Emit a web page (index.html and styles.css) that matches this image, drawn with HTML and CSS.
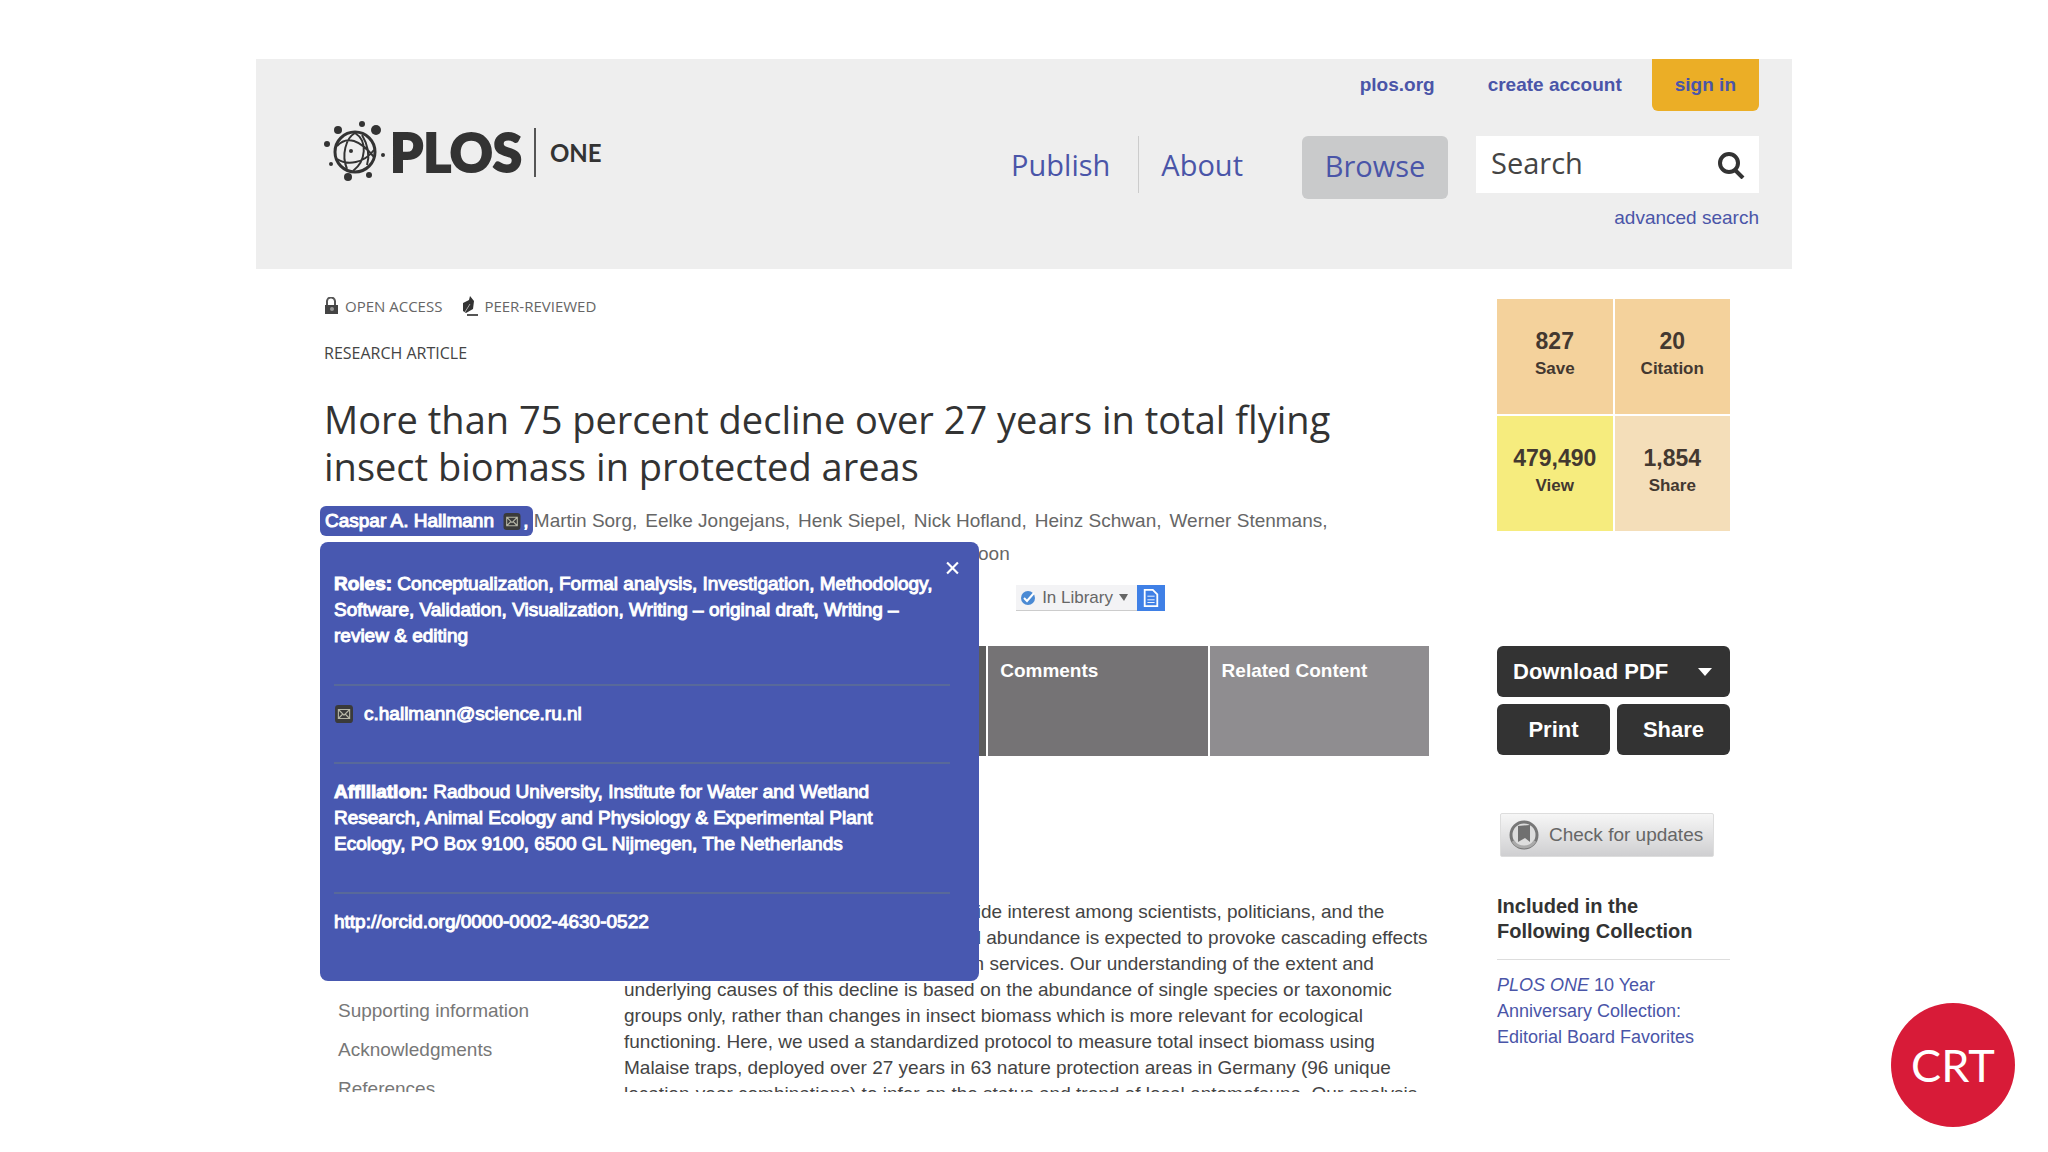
FILE: index.html
```html
<!DOCTYPE html>
<html lang="en">
<head>
  <meta charset="UTF-8">
  <title>More than 75 percent decline over 27 years in total flying insect biomass in protected areas</title>
  <link rel="stylesheet" href="styles.css">
</head>
<body>

  <div class="page">

    <!-- Header -->
    <header class="header">
      <a class="logo" href="#">
        <svg class="logo-icon" width="62" height="62" viewBox="0 0 62 62">
          <g fill="none" stroke="#333" stroke-width="2">
            <circle cx="31" cy="31" r="20" stroke-width="3"/>
            <path d="M23 48C17 34 22 17 31 12M31 12C44 20 42 40 29 50M13 25C23 14 36 19 50 36M13 38C24 45 40 42 50 29M38 14C44 24 46 34 43 44"/>
          </g>
          <g fill="#333">
            <circle cx="14" cy="9" r="4"/>
            <circle cx="38" cy="3" r="3"/>
            <circle cx="52" cy="9" r="5"/>
            <circle cx="3" cy="23" r="3"/>
            <circle cx="59" cy="34" r="2"/>
            <circle cx="7" cy="43" r="2"/>
            <circle cx="24" cy="56" r="4"/>
            <circle cx="45" cy="54" r="3"/>
            <circle cx="27" cy="30" r="2"/>
          </g>
        </svg>
        <span class="logo-plos">PLOS</span>
        <span class="logo-one">ONE</span>
      </a>

      <div class="header-right">
        <div class="user-links">
          <a href="#">plos.org</a>
          <a href="#">create account</a>
          <a class="sign-in" href="#">sign in</a>
        </div>
        <div class="main-nav">
          <a class="publish" href="#">Publish</a>
          <a class="about" href="#">About</a>
          <button class="browse" type="button">Browse</button>
          <form class="search">
            <input type="text" aria-label="Search" placeholder="Search">
            <button type="button" aria-label="Submit search">
              <svg width="28" height="28" viewBox="0 0 28 28" fill="none" stroke="#333" stroke-width="4">
                <circle cx="12" cy="12" r="9"/>
                <path d="M18 19l8 8"/>
              </svg>
            </button>
          </form>
        </div>
        <a class="advanced" href="#">advanced search</a>
      </div>
    </header>

    <div class="content">

      <!-- Article -->
      <main class="article">
        <div class="badges">
          <svg width="15" height="18" viewBox="0 0 15 18">
            <path d="M3 8V5a4 4 0 0 1 8-1v4" fill="none" stroke="#555" stroke-width="2"/>
            <path d="M1 8h13v9H1z" fill="#444"/>
            <circle cx="8" cy="12" r="2" fill="#999"/>
          </svg>
          <span>OPEN ACCESS</span>
          <svg class="pen" width="16" height="20" viewBox="0 0 16 20">
            <path d="M8 0l4 5-1 8-7 4-3-2V7l6-3z" fill="#333"/>
            <path d="M3 16l5-8" stroke="#aaa"/>
            <path d="M5 19h11" stroke="#555" stroke-width="2"/>
          </svg>
          <span>PEER-REVIEWED</span>
        </div>
        <p class="article-type">RESEARCH ARTICLE</p>
        <h1>More than 75 percent decline over 27 years in total flying insect biomass in protected areas</h1>

        <div class="authors">
          <button class="author-active" type="button">Caspar A. Hallmann
            <svg class="mail" width="18" height="17" viewBox="0 0 16 16">
              <rect width="16" height="16" rx="3" fill="#3a3a3a"/>
              <path d="M3 4h10v8H3zl5 5 5-5M3 12l4-4m6 4L9 8" fill="none" stroke="#b5b5a5"/>
            </svg>,</button>
          <span>Martin Sorg,</span><span>Eelke Jongejans,</span><span>Henk Siepel,</span><span>Nick Hofland,</span><span>Heinz Schwan,</span><span>Werner Stenmans,</span><br>
          <span>Andreas Müller,</span><span>Hubert Sumser,</span><span>Thomas Hörren,</span><span>Dave Goulson,</span><span>Hans de Kroon</span>

          <!-- Author details -->
          <div class="popup">
            <button class="close" type="button" aria-label="Close">
              <svg width="13" height="14" viewBox="0 0 12 12" stroke="#fff" stroke-width="2">
                <path d="M1 1l10 10M11 1L1 11"/>
              </svg>
            </button>
            <p><strong>Roles:</strong> Conceptualization, Formal analysis, Investigation, Methodology, Software, Validation, Visualization, Writing – original draft, Writing – review &amp; editing</p>
            <p class="line-item">
              <svg class="mail-icon" width="20" height="18" viewBox="0 0 16 16">
                <rect width="16" height="16" rx="3" fill="#3a3a3a"/>
                <path d="M3 4h10v8H3zl5 5 5-5M3 12l4-4m6 4L9 8" fill="none" stroke="#b5b5a5"/>
              </svg>
              <a href="#">c.hallmann@science.ru.nl</a>
            </p>
            <p><strong>Affiliation:</strong> Radboud University, Institute for Water and Wetland Research, Animal Ecology and Physiology &amp; Experimental Plant Ecology, PO Box 9100, 6500 GL Nijmegen, The Netherlands</p>
            <p class="line-item"><a href="#">http://orcid.org/0000-0002-4630-0522</a></p>
          </div>
        </div>

        <div class="published">
          <button class="library" type="button">
            <svg width="16" height="16" viewBox="0 0 16 16">
              <circle cx="8" cy="8" r="7" fill="#4a8ad4"/>
              <path d="M4 8l3 3 7-8" fill="none" stroke="#fff" stroke-width="2"/>
            </svg>
            In Library
            <svg width="9" height="7" viewBox="0 0 9 7"><path d="M0 0h9L5 7z" fill="#666"/></svg>
          </button>
          <button class="doc" type="button" aria-label="Open document">
            <svg width="16" height="18" viewBox="0 0 16 20" fill="none" stroke="#fff" stroke-width="2">
              <path d="M1 1h9l5 5v13H1z"/>
              <path d="M4 8h8M4 12h8M4 15h8" stroke-width="1"/>
            </svg>
          </button>
        </div>

        <nav class="tabs">
          <a class="tab-article" href="#" aria-label="Article"></a>
          <a class="tab-authors" href="#" aria-label="Authors"></a>
          <a class="tab-metrics" href="#" aria-label="Metrics"></a>
          <a class="tab-comments" href="#">Comments</a>
          <a class="tab-related" href="#">Related Content</a>
        </nav>

        <div class="article-body">
          <nav class="sections">
            <a href="#">Supporting information</a>
            <a href="#">Acknowledgments</a>
            <a href="#">References</a>
          </nav>
          <section class="abstract">
            <p>Global declines in insects have sparked wide interest among scientists, politicians, and the general public. Loss of insect diversity and abundance is expected to provoke cascading effects on food webs and to jeopardize ecosystem services. Our understanding of the extent and underlying causes of this decline is based on the abundance of single species or taxonomic groups only, rather than changes in insect biomass which is more relevant for ecological functioning. Here, we used a standardized protocol to measure total insect biomass using Malaise traps, deployed over 27 years in 63 nature protection areas in Germany (96 unique location-year combinations) to infer on the status and trend of local entomofauna. Our analysis</p>
          </section>
        </div>
      </main>

      <!-- Sidebar -->
      <aside class="sidebar">
        <div class="metrics">
          <div class="metric"><b>827</b><span>Save</span></div>
          <div class="metric"><b>20</b><span>Citation</span></div>
          <div class="metric view"><b>479,490</b><span>View</span></div>
          <div class="metric share"><b>1,854</b><span>Share</span></div>
        </div>

        <div class="actions">
          <button class="download" type="button">Download PDF
            <svg width="14" height="8" viewBox="0 0 14 8"><path d="M0 0h14L7 8z" fill="#fff"/></svg>
          </button>
          <button type="button">Print</button>
          <button type="button">Share</button>
        </div>

        <button class="updates" type="button">
          <svg width="30" height="30" viewBox="0 0 30 30">
            <circle cx="15" cy="15" r="13" fill="#ddd" stroke="#777" stroke-width="3"/>
            <path d="M4 21a13 13 0 0 0 22 0" fill="none" stroke="#aaa" stroke-width="3"/>
            <path d="M9 6l12-1v17l-5-4-7 4z" fill="#707070"/>
          </svg>
          Check for updates
        </button>

        <h3>Included in the<br>Following Collection</h3>
        <a class="collection" href="#"><i>PLOS ONE</i> 10 Year Anniversary Collection: Editorial Board Favorites</a>
      </aside>

    </div>
  </div>

  <div class="crt">CRT</div>

</body>
</html>
```

FILE: styles.css
```css
* {
  box-sizing: border-box;
}

body {
  margin: 0;
  height: 100vh;
  padding: 59px 0 60px;
  overflow: hidden;
  background-color: #fff;
  font-family: "Liberation Sans", Arial, sans-serif;
  font-size: 19px;
  line-height: 26px;
  color: #444;
}

a {
  color: #4a55a8;
  text-decoration: none;
}

p, h1, h3 {
  margin: 0;
}

button, input {
  font: inherit;
  border: 0;
  padding: 0;
}

button {
  cursor: pointer;
}

.page {
  width: 75%;
  height: 100%;
  margin: 0 auto;
  overflow: hidden;
}

/* Header */
.header {
  display: flex;
  justify-content: space-between;
  height: 210px;
  padding: 0 33px 0 68px;
  background-color: #eee;
}

.logo {
  display: flex;
  align-items: center;
  align-self: flex-start;
  margin-top: 62px;
  height: 62px;
  font-family: Lato, sans-serif;
  font-weight: 900;
  color: #333;
}

.logo-plos {
  margin-left: 4px;
  font-size: 53px;
  line-height: 60px;
  -webkit-text-stroke: 2px #333;
}

.logo-one {
  margin-left: 12px;
  padding-left: 14px;
  border-left: 2px solid #555;
  font-size: 24px;
  font-weight: 700;
  line-height: 49px;
}

.header-right {
  display: flex;
  flex-direction: column;
  align-items: flex-end;
}

.user-links {
  display: flex;
  align-items: center;
  height: 52px;
  font-weight: bold;
}

.user-links a {
  margin-left: 53px;
}

.user-links .sign-in {
  margin-left: 30px;
  padding: 0 23px;
  line-height: 52px;
  background-color: #ebae26;
  border-radius: 0 0 6px 6px;
}

.main-nav {
  display: flex;
  align-items: flex-start;
  margin-top: 25px;
  font-family: "Open Sans", sans-serif;
  font-size: 29px;
  line-height: 57px;
}

.publish {
  padding-right: 28px;
  border-right: 1px solid #ccc;
}

.about {
  padding: 0 59px 0 22px;
}

.browse {
  width: 146px;
  height: 63px;
  padding-bottom: 4px;
  background-color: #c9cacb;
  border-radius: 6px;
  color: #4a55a8;
}

.search {
  display: flex;
  align-items: center;
  width: 283px;
  height: 57px;
  margin-left: 28px;
  padding: 0 14px 0 15px;
  background-color: #fff;
}

.search input {
  flex: 1;
  min-width: 0;
  padding-bottom: 4px;
  background: none;
  outline: none;
}

.search input::placeholder {
  color: #444;
}

.search button {
  display: flex;
  background: none;
}

.advanced {
  margin-top: 6px;
}

/* Article */
.content {
  display: flex;
  gap: 68px;
  padding: 25px 62px 0 68px;
}

.article {
  flex: 1;
  min-width: 0;
}

.badges {
  display: flex;
  align-items: center;
  gap: 6px;
  font-family: "Open Sans", sans-serif;
  font-size: 15px;
  line-height: 24px;
  color: #666;
}

.badges .pen {
  margin-left: 14px;
}

.article-type {
  margin-top: 23px;
  font-family: "Open Sans", sans-serif;
  font-size: 16px;
  line-height: 24px;
}

h1 {
  margin-top: 31px;
  font-family: "Open Sans", sans-serif;
  font-size: 38px;
  font-weight: 400;
  line-height: 47px;
  color: #333;
}

.authors {
  position: relative;
  margin-top: 14px;
  line-height: 33px;
  white-space: nowrap;
  color: #666;
}

.authors span + span {
  margin-left: 8px;
}

.author-active {
  height: 30px;
  margin: 0 -4px;
  padding: 0 4px 0 5px;
  background-color: #4858b0;
  border-radius: 6px;
  line-height: 30px;
  color: #fff;
  -webkit-text-stroke: 1px #fff;
}

.mail {
  margin: 0 2px 0 4px;
  vertical-align: middle;
}

.popup {
  position: absolute;
  top: 38px;
  left: -4px;
  width: 659px;
  height: 439px;
  padding: 29px 29px 0 14px;
  background-color: #4858b0;
  border-radius: 8px;
  line-height: 26px;
  white-space: normal;
  color: #fff;
  -webkit-text-stroke: 1px #fff;
}

.popup p {
  padding-right: 10px;
}

.popup p + p {
  margin-top: 35px;
  padding-top: 15px;
  border-top: 2px solid #58699a;
}

.popup a {
  color: #fff;
}

.line-item {
  display: flex;
  align-items: center;
  gap: 10px;
}

.close {
  position: absolute;
  top: 19px;
  right: 20px;
  display: flex;
  background: none;
}

/* Library row */
.published {
  display: flex;
  justify-content: flex-end;
  height: 26px;
  margin-top: 15px;
  padding-right: 264px;
}

.library {
  display: flex;
  align-items: center;
  gap: 6px;
  padding: 0 9px 0 4px;
  background-color: #f3f3f5;
  border-bottom: 1px solid #ccc;
  font-size: 17px;
  color: #666;
}

.doc {
  display: flex;
  align-items: center;
  justify-content: center;
  width: 28px;
  background-color: #3f80e6;
}

.tabs {
  display: grid;
  grid-template-columns: repeat(5, 1fr);
  gap: 2px;
  height: 110px;
  margin-top: 35px;
}

.tabs a {
  padding: 12px;
  font-weight: bold;
  color: #fff;
}

.tab-article {
  background-color: #333;
}

.tab-authors {
  background-color: #4a4a4a;
}

.tab-metrics {
  background-color: #5c5c5c;
}

.tab-comments {
  background-color: #757375;
}

.tab-related {
  background-color: #8f8d90;
}

.article-body {
  display: grid;
  grid-template-columns: 300px 1fr;
  margin-top: 143px;
}

.sections {
  margin-top: 92px;
  padding-left: 14px;
  line-height: 39px;
}

.sections a {
  display: block;
  color: #777;
}

.abstract {
  margin-right: -10px;
}

/* Sidebar */
.sidebar {
  width: 233px;
  padding-top: 5px;
}

.metrics {
  display: grid;
  grid-template-columns: 1fr 1fr;
  gap: 2px;
}

.metric {
  display: flex;
  flex-direction: column;
  align-items: center;
  height: 115px;
  padding-top: 28px;
  background-color: #f4d29c;
  font-size: 17px;
  font-weight: bold;
  color: #433830;
}

.metric b {
  font-size: 23px;
  line-height: 29px;
}

.metric.view {
  background-color: #f6ec7e;
}

.metric.share {
  background-color: #f4deb9;
}

.actions {
  display: grid;
  grid-template-columns: 1fr 1fr;
  gap: 7px;
  margin-top: 115px;
}

.actions button {
  height: 51px;
  background-color: #333;
  border-radius: 6px;
  font-size: 22px;
  font-weight: bold;
  color: #fff;
}

.actions .download {
  display: flex;
  grid-column: 1 / 3;
  align-items: center;
  justify-content: space-between;
  padding: 0 18px 0 16px;
}

.updates {
  display: flex;
  align-items: center;
  gap: 10px;
  height: 44px;
  margin: 58px 0 37px 3px;
  padding: 0 10px 0 8px;
  background: linear-gradient(#f6f6f6, #cfcfd1);
  border: 1px solid #ddd;
  border-radius: 2px;
  white-space: nowrap;
  color: #666;
}

h3 {
  padding-bottom: 15px;
  border-bottom: 1px solid #ddd;
  font-size: 20px;
  line-height: 25px;
  color: #333;
}

.collection {
  display: block;
  padding: 12px 30px 0 0;
  font-size: 18px;
}

/* Corner logo */
.crt {
  position: fixed;
  right: 33px;
  bottom: 25px;
  width: 124px;
  height: 124px;
  border-radius: 50%;
  background-color: #d81b38;
  font-family: Lato, sans-serif;
  font-size: 45px;
  line-height: 124px;
  text-align: center;
  color: #fff;
}
```
